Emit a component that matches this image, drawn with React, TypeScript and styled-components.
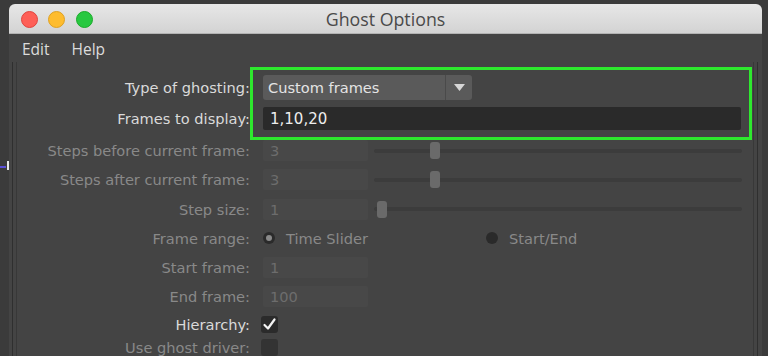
import React from "react";
import styled, { createGlobalStyle } from "styled-components";

const Global = createGlobalStyle`
  html, body {
    margin: 0;
    padding: 0;
    width: 768px;
    height: 356px;
    overflow: hidden;
    background: #3b3b3b;
  }
  body {
    font-family: "DejaVu Sans", "Open Sans", sans-serif;
  }
  * { box-sizing: border-box; }
`;

const Page = styled.div`
  display: flex;
  padding-top: 4px;
  height: 356px;
`;

const Backdrop = styled.div`
  width: 9px;
  flex: none;
  display: flex;
  flex-direction: column;
  padding-top: 157px;
`;

const BackdropMark = styled.div`
  display: flex;
  align-items: center;
  height: 9px;
  gap: 1px;
  &::before {
    content: "";
    width: 6px;
    height: 2px;
    margin-top: 3px;
    background: #5a4fd6;
  }
  &::after {
    content: "";
    width: 2px;
    height: 9px;
    background: #e8e8e8;
  }
`;

const Window = styled.div`
  width: 753px;
  flex: none;
  height: 360px;
  background: #444444;
  border-radius: 6px 6px 0 0;
  overflow: hidden;
  display: flex;
  flex-direction: column;
`;

const TitleBar = styled.div`
  height: 30px;
  flex: none;
  display: grid;
  grid-template-columns: 1fr auto 1fr;
  align-items: center;
  background: linear-gradient(#e7e7e7, #d3d3d3);
  border-bottom: 1px solid #b3b3b3;
`;

const Lights = styled.div`
  display: flex;
  gap: 10.5px;
  padding-left: 11.5px;
  padding-top: 1px;
`;

const Light = styled.span<{ $c: string; $b: string }>`
  width: 17px;
  height: 17px;
  border-radius: 50%;
  background: ${(p) => p.$c};
  border: 0.5px solid ${(p) => p.$b};
`;

const Title = styled.div`
  font-family: "Open Sans", sans-serif;
  font-size: 17.8px;
  color: #4a4a4a;
  padding-top: 1px;
`;

const MenuBar = styled.div`
  height: 28px;
  flex: none;
  display: flex;
  align-items: center;
  gap: 22px;
  padding-left: 13px;
  padding-top: 1px;
  font-family: "Open Sans", sans-serif;
  font-size: 15.5px;
  color: #dcdcdc;
`;

const Frame = styled.div`
  flex: 1;
  display: flex;
  margin: 0 4px 0 3px;
  padding: 0 3px;
  border-left: 1px solid #2f2f2f;
  border-right: 1px solid #2f2f2f;
`;

const Inner = styled.div`
  flex: 1;
  border-left: 1px solid #383838;
  border-right: 1px solid #383838;
  padding-top: 5px;
  display: flex;
  flex-direction: column;
`;

const HighlightRow = styled.div`
  display: flex;
`;

const LabelStack = styled.div`
  width: 233px;
  padding-top: 8px;
  display: flex;
  flex-direction: column;
  gap: 7px;
`;

const Label = styled.div<{ $on?: boolean; $h?: number }>`
  width: 233px;
  flex: none;
  height: ${(p) => (p.$h ? `${p.$h}px` : "auto")};
  display: flex;
  align-items: center;
  justify-content: flex-end;
  font-size: 14.6px;
  white-space: nowrap;
  color: ${(p) => (p.$on ? "#dadada" : "#898989")};
`;

const GreenBox = styled.div`
  width: 502px;
  border: 3px solid #2ee82e;
  padding: 5px 8px 7px 10px;
  display: flex;
  flex-direction: column;
  gap: 7px;
`;

const Dropdown = styled.div`
  width: 209px;
  height: 25px;
  display: flex;
  background: #5a5a5a;
  border-radius: 3px;
`;

const DropText = styled.div`
  flex: 1;
  display: flex;
  align-items: center;
  padding-left: 5px;
  font-size: 14.6px;
  color: #e4e4e4;
`;

const DropArrow = styled.div`
  width: 27px;
  display: flex;
  align-items: center;
  justify-content: center;
  border-left: 1px solid #4a4a4a;
`;

const TextField = styled.div`
  height: 23px;
  display: flex;
  align-items: center;
  padding-left: 7px;
  background: #2a2a2a;
  border-radius: 2px;
  font-size: 15px;
  color: #ededed;
`;

const Rows = styled.div`
  display: flex;
  flex-direction: column;
  gap: 8.25px;
`;

const Row = styled.div`
  display: flex;
  align-items: center;
  min-height: 21px;
`;

const Control = styled.div`
  flex: 1;
  display: flex;
  align-items: center;
  margin-left: 13px;
  margin-right: 11px;
`;

const NumField = styled.div`
  width: 105px;
  height: 21px;
  flex: none;
  display: flex;
  align-items: center;
  padding-left: 7px;
  background: #484848;
  border-radius: 2px;
  font-size: 14.6px;
  color: #6d6d6d;
`;

const Slider = styled.div`
  flex: 1;
  margin-left: 6px;
  height: 17px;
  position: relative;
  display: flex;
  align-items: center;
`;

const Track = styled.div`
  flex: 1;
  height: 4px;
  border-radius: 2px;
  background: #3c3c3c;
`;

const Handle = styled.div`
  position: absolute;
  top: 0;
  width: 10px;
  height: 17px;
  border-radius: 3px;
  background: #6a6a6a;
`;

const RadioOption = styled.div`
  width: 223px;
  display: flex;
  align-items: center;
  gap: 11px;
  font-size: 14.6px;
  color: #898989;
`;

const Radio = styled.span<{ $sel?: boolean }>`
  width: 12px;
  height: 12px;
  border-radius: 50%;
  background: #2a2a2a;
  display: flex;
  align-items: center;
  justify-content: center;
  &::after {
    content: "";
    display: ${(p) => (p.$sel ? "block" : "none")};
    width: 6px;
    height: 6px;
    border-radius: 50%;
    background: #8a8a8a;
  }
`;

const CheckBox = styled.div<{ $on?: boolean }>`
  width: 17px;
  height: 17px;
  margin-left: -2px;
  border-radius: 3px;
  background: ${(p) => (p.$on ? "#2b2b2b" : "#333333")};
  display: flex;
  align-items: center;
  justify-content: center;
`;

const CheckGroup = styled.div`
  display: flex;
  flex-direction: column;
  gap: 2.5px;
  margin-top: -2px;
`;

const sliders = [
  { label: "Steps before current frame:", value: "3", pos: 56 },
  { label: "Steps after current frame:", value: "3", pos: 56 },
  { label: "Step size:", value: "1", pos: 3 },
];

export default function App() {
  return (
    <>
      <Global />
      <Page>
        <Backdrop>
          <BackdropMark />
        </Backdrop>
        <Window>
          <TitleBar>
            <Lights>
              <Light $c="#fe5f57" $b="#e0443e" />
              <Light $c="#febc2e" $b="#dea123" />
              <Light $c="#28c840" $b="#1aab29" />
            </Lights>
            <Title>Ghost Options</Title>
            <div />
          </TitleBar>
          <MenuBar>
            <span>Edit</span>
            <span>Help</span>
          </MenuBar>
          <Frame>
            <Inner>
              <HighlightRow>
                <LabelStack>
                  <Label $on $h={25}>Type of ghosting:</Label>
                  <Label $on $h={23}>Frames to display:</Label>
                </LabelStack>
                <GreenBox>
                  <Dropdown>
                    <DropText>Custom frames</DropText>
                    <DropArrow>
                      <svg width="11" height="7" viewBox="0 0 11 7">
                        <polygon points="0,0 11,0 5.5,7" fill="#d6d6d6" />
                      </svg>
                    </DropArrow>
                  </Dropdown>
                  <TextField>1,10,20</TextField>
                </GreenBox>
              </HighlightRow>
              <Rows>
                {sliders.map((s) => (
                  <Row key={s.label}>
                    <Label>{s.label}</Label>
                    <Control>
                      <NumField>{s.value}</NumField>
                      <Slider>
                        <Track />
                        <Handle style={{ left: s.pos }} />
                      </Slider>
                    </Control>
                  </Row>
                ))}
                <Row>
                  <Label>Frame range:</Label>
                  <Control>
                    <RadioOption>
                      <Radio $sel />
                      Time Slider
                    </RadioOption>
                    <RadioOption>
                      <Radio />
                      Start/End
                    </RadioOption>
                  </Control>
                </Row>
                <Row>
                  <Label>Start frame:</Label>
                  <Control>
                    <NumField>1</NumField>
                  </Control>
                </Row>
                <Row>
                  <Label>End frame:</Label>
                  <Control>
                    <NumField>100</NumField>
                  </Control>
                </Row>
                <CheckGroup>
                  <Row>
                    <Label $on>Hierarchy:</Label>
                    <Control>
                      <CheckBox $on>
                        <svg width="15" height="15" viewBox="0 0 15 15">
                          <path
                            d="M2.5 8 L6 11.5 L12.5 2.5"
                            fill="none"
                            stroke="#f4f4f4"
                            strokeWidth="2.2"
                            strokeLinecap="round"
                            strokeLinejoin="round"
                          />
                        </svg>
                      </CheckBox>
                    </Control>
                  </Row>
                  <Row>
                    <Label>Use ghost driver:</Label>
                    <Control>
                      <CheckBox />
                    </Control>
                  </Row>
                </CheckGroup>
              </Rows>
            </Inner>
          </Frame>
        </Window>
      </Page>
    </>
  );
}
